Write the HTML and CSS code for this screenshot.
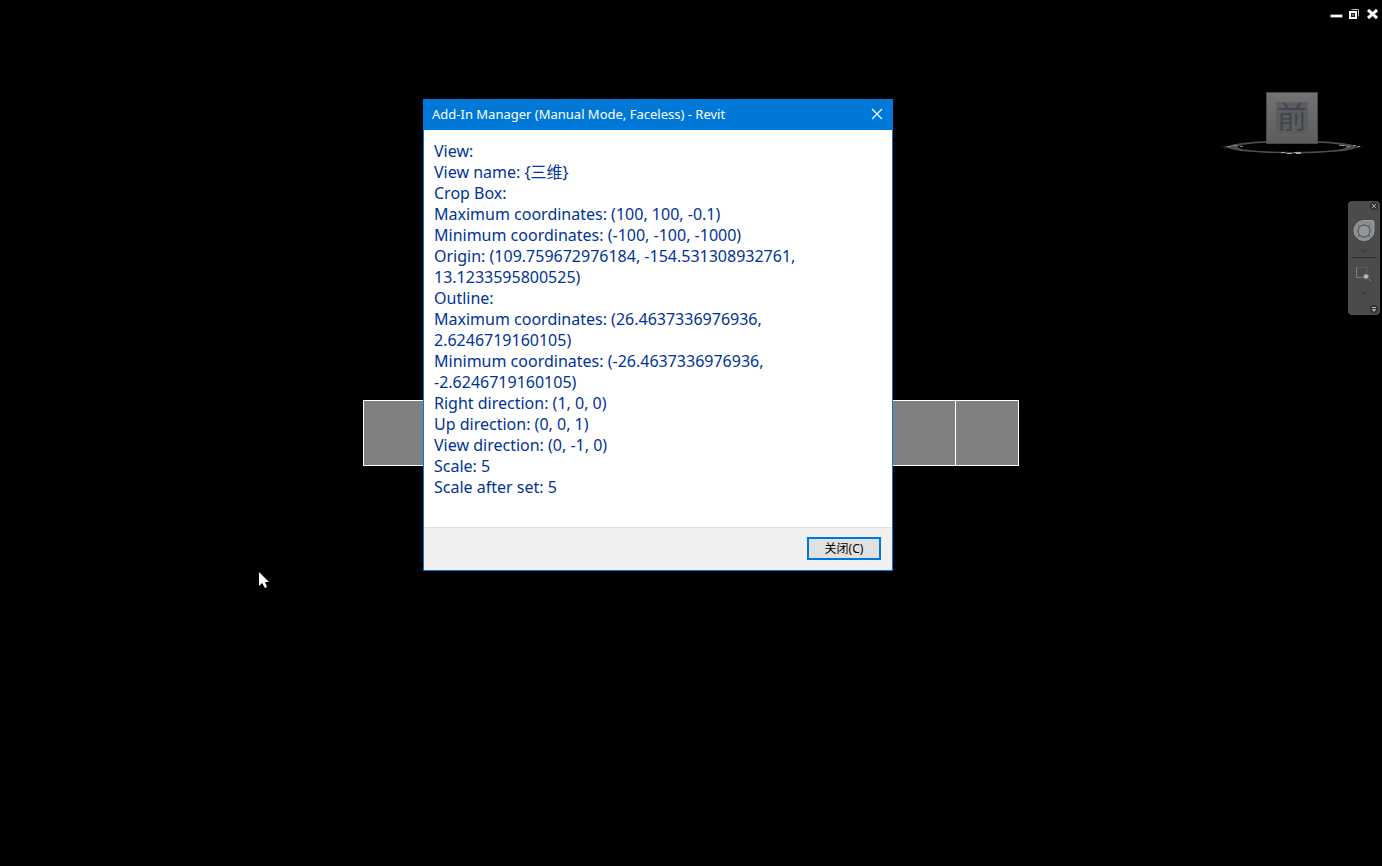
FILE: index.html
```
<!DOCTYPE html>
<html lang="en">

<head>
    <meta charset="UTF-8">
    <meta name="viewport" content="width=device-width, initial-scale=1.0">
    <title>Revit</title>
    <link rel="stylesheet" href="styles.css">
</head>

<body>
    <main class="viewport">
        <div class="window-controls">
            <button type="button" aria-label="Minimize">
                <svg width="14" height="14" viewBox="0 0 14 14">
                    <rect x="1.5" y="7.5" width="12" height="3" fill="#fff" stroke="#555" />
                </svg>
            </button>
            <button type="button" aria-label="Restore">
                <svg width="14" height="14" viewBox="0 0 14 14">
                    <path d="M4.500 2.500h7v7" fill="none" stroke="#bbb" />
                    <rect x="3" y="5" width="6" height="6" fill="#222" stroke="#fff" stroke-width="2" />
                    <rect x="5" y="7" width="2" height="2" fill="#777" />
                </svg>
            </button>
            <button type="button" aria-label="Close view">
                <svg width="14" height="14" viewBox="0 0 14 14">
                    <path d="M3 3l9 8M12 3l-9 8" stroke="#555" stroke-width="4" />
                    <path d="M3 3l9 8M12 3l-9 8" stroke="#fff" stroke-width="2.500" />
                </svg>
            </button>
        </div>

        <!-- wall segments of the model -->
        <div class="model">
            <div class="wall"></div>
            <div class="wall wall-end"></div>
        </div>

        <!-- view cube with compass ring -->
        <div class="view-cube">
            <svg class="compass" width="144" height="16" viewBox="0 0 144 16">
                <path d="M8 7a64 6.500 0 0 1 128 0a64 6.500 0 0 1-128 0zM18 7a54 5 0 0 0 108 0a54 5 0 0 0-108 0z" fill="#4c4c4c" fill-rule="evenodd" />
                <path d="M1 6.500h8v2zM143 6.500h-8v2z" fill="#454545" />
                <path d="M7 6.500h4M13 5.500h4M20 6.500h3M119 5.500h6M127 6.500h3M133 5.500h3M137 6.500h3" stroke="#858585" />
                <path d="M61 12.500h4l1 1M67 13.500h5M74 12.500h7M76 13.500h5" fill="none" stroke="#a5a5a5" />
            </svg>
            <button type="button" class="cube-face"><span lang="zh">前</span></button>
        </div>

        <nav class="nav-bar" aria-label="Navigation bar">
            <svg width="32" height="114" viewBox="0 0 32 114">
                <circle cx="26" cy="5" r="4" fill="#303030" />
                <path d="M24 3l4 4M28 3l-4 4" stroke="#aaa" />
                <path d="M16 19.500h8q2 0 2 2v8.500a10 10 0 1 1-10-10.500z" fill="#8b8e90" stroke="#a0a0a0" />
                <path d="M10 24l12 12M22 24l-12 12" stroke="#505356" />
                <circle cx="16" cy="30" r="6" fill="#949799" stroke="#44474a" />
                <path d="M13 49h6l-3 3z" fill="#3d3d3d" />
                <path d="M3 56.500h26" stroke="#303030" />
                <path d="M9 66.500h10v6" fill="none" stroke="#5c5c5c" />
                <path d="M8.500 66v10.500h6" fill="none" stroke="#808080" />
                <circle cx="18" cy="75.500" r="2.500" fill="#b7bebb" stroke="#777" />
                <path d="M21 78l2 2" stroke="#808080" />
                <path d="M13 91h6l-3 3z" fill="#3d3d3d" />
                <circle cx="26" cy="108" r="4" fill="#303030" />
                <path d="M24 106.500h4" stroke="#bbb" />
                <path d="M23.500 108h5l-2.500 3z" fill="#aaa" />
            </svg>
        </nav>

        <section class="dialog" role="dialog" aria-labelledby="dialogTitle">
            <header class="dialog-header">
                <h1 id="dialogTitle">Add-In Manager (Manual Mode, Faceless) - Revit</h1>
                <button type="button" class="dialog-close" aria-label="Close">
                    <svg width="12" height="12" viewBox="0 0 12 12">
                        <path d="M1 1l10 10M11 1l-10 10" stroke="#fff" stroke-width="1.200" />
                    </svg>
                </button>
            </header>
            <div class="dialog-body">
                <p>View:</p>
                <p>View name: {三维}</p>
                <p>Crop Box:</p>
                <p>Maximum coordinates: (100, 100, -0.1)</p>
                <p>Minimum coordinates: (-100, -100, -1000)</p>
                <p>Origin: (109.759672976184, -154.531308932761, 13.1233595800525)</p>
                <p>Outline:</p>
                <p>Maximum coordinates: (26.4637336976936, 2.6246719160105)</p>
                <p>Minimum coordinates: (-26.4637336976936, -2.6246719160105)</p>
                <p>Right direction: (1, 0, 0)</p>
                <p>Up direction: (0, 0, 1)</p>
                <p>View direction: (0, -1, 0)</p>
                <p>Scale: 5</p>
                <p>Scale after set: 5</p>
            </div>
            <footer class="dialog-footer">
                <button type="button" class="btn-close">关闭(C)</button>
            </footer>
        </section>

        <svg class="cursor" width="12" height="19" viewBox="0 0 12 19">
            <path d="M1 1v14l3-3 3 5 2-1-2-5h4z" fill="#fff" />
        </svg>
    </main>
</body>

</html>
```
FILE: styles.css
```
* {
    box-sizing: border-box;
}

body {
    margin: 0;
    background: #000;
    font-family: "Noto Sans", "Noto Sans CJK SC", sans-serif;
}

h1,
p {
    margin: 0;
}

button {
    padding: 0;
    border: none;
    background: none;
    font-family: inherit;
}

svg {
    display: block;
}

.viewport {
    position: relative;
    min-height: 100vh;
    overflow: hidden;
}

.window-controls {
    display: flex;
    justify-content: flex-end;
    gap: 4px;
    padding: 7px 3px;
}

/* model */
.model {
    position: absolute;
    top: 400px;
    left: 363px;
    display: flex;
    width: 656px;
    height: 66px;
    border: 1px solid #fff;
    background: #808080;
}

.wall {
    flex: 1;
}

.wall-end {
    flex: 0 0 63px;
    border-left: 1px solid #fff;
}

/* view cube */
.view-cube {
    position: absolute;
    top: 92px;
    right: 18px;
    display: flex;
    justify-content: center;
    width: 144px;
    height: 64px;
}

.compass {
    position: absolute;
    bottom: 0;
    left: 0;
}

.cube-face {
    position: relative;
    display: flex;
    align-items: center;
    justify-content: center;
    width: 52px;
    height: 52px;
    border: 1px solid #484848;
    background: linear-gradient(#737373, #5c5c5c);
}

.cube-face span {
    width: 32px;
    height: 32px;
    background: #5b5d61;
    color: #42454b;
    font-family: "Noto Sans CJK SC", sans-serif;
    font-size: 30px;
    line-height: 26px;
}

.nav-bar {
    position: absolute;
    top: 201px;
    right: 2px;
    border-radius: 4px;
    background: #4b4b4b;
}

/* dialog */
.dialog {
    position: absolute;
    top: 99px;
    left: 423px;
    width: 470px;
    border: 1px solid #0078d7;
    background: #fff;
}

.dialog-header {
    display: flex;
    align-items: center;
    justify-content: space-between;
    height: 30px;
    padding: 0 9px 2px 8px;
    background: #0078d7;
}

.dialog-header h1 {
    color: #fff;
    font-size: 13px;
    font-weight: normal;
}

.dialog-body {
    max-width: 390px;
    padding: 11px 10px 29px;
    color: #003399;
    font-size: 16px;
    line-height: 21px;
}

.dialog-footer {
    display: flex;
    justify-content: flex-end;
    padding: 9px 11px 10px;
    border-top: 1px solid #dfdfdf;
    background: #f0f0f0;
}

.btn-close {
    width: 74px;
    height: 23px;
    border: 2px solid #0078d7;
    background: #e1e1e1;
    color: #000;
    font-size: 12px;
    line-height: 18px;
}

.cursor {
    position: absolute;
    top: 571px;
    left: 258px;
}
```
